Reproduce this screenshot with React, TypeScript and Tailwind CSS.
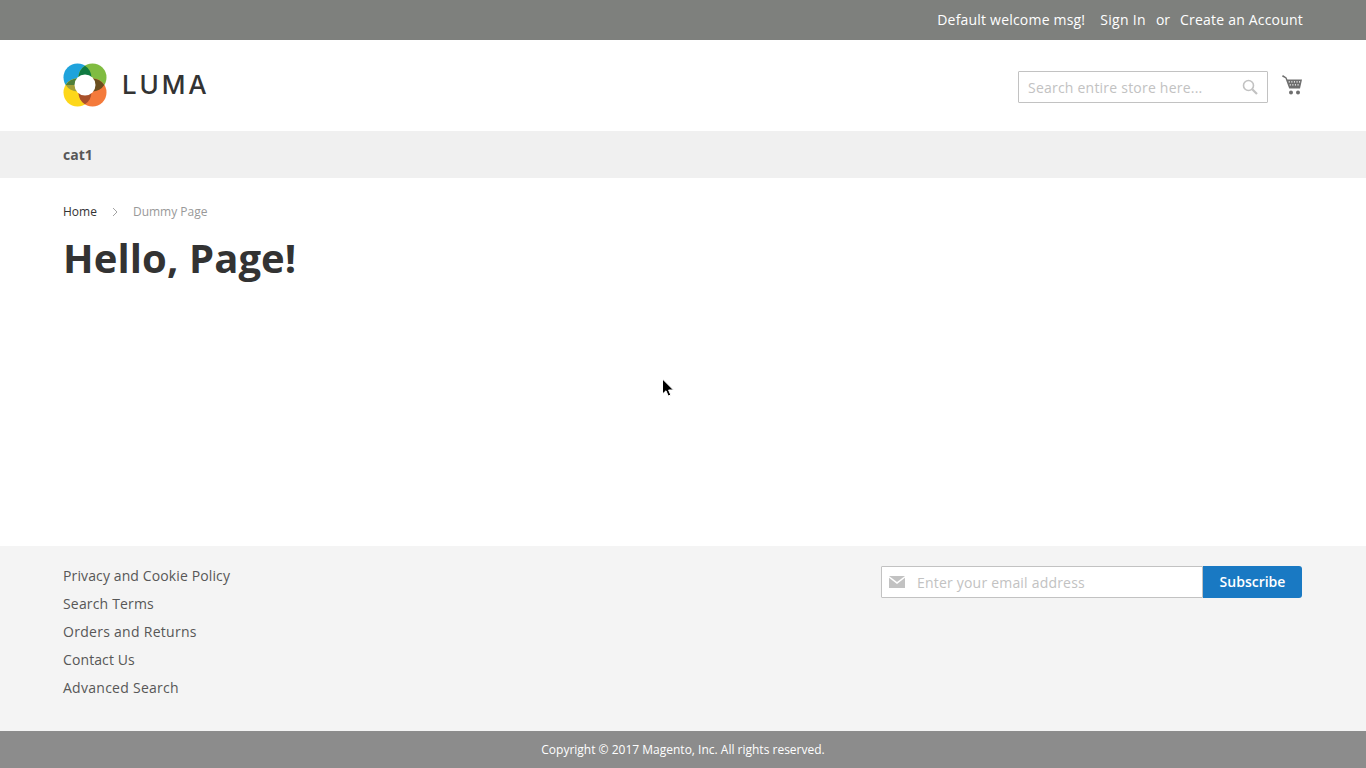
import React from "react";

const Logo = () => (
  <svg width="44" height="44" viewBox="0 0 44 44" className="block">
    <circle cx="14.5" cy="14.5" r="14" fill="#1fa3dc" />
    <circle cx="29.5" cy="14.5" r="14" fill="#80bc41" />
    <circle cx="14.5" cy="29.5" r="14" fill="#fdd71a" />
    <circle cx="29.5" cy="29.5" r="14" fill="#f47a3b" />
    <path d="M22 2.7 A14 14 0 0 1 22 26.3 A14 14 0 0 1 22 2.7Z" fill="#0f7a41" />
    <path d="M2.7 22 A14 14 0 0 1 26.3 22 A14 14 0 0 1 2.7 22Z" fill="#a3a03a" />
    <path d="M2.7 22 A14 14 0 0 1 26.3 22Z" fill="#4f7f39" />
    <path d="M17.7 22 A14 14 0 0 1 41.3 22 A14 14 0 0 1 17.7 22Z" fill="#6b4f1f" />
    <path d="M22 17.7 A14 14 0 0 1 22 41.3 A14 14 0 0 1 22 17.7Z" fill="#a9502a" />
    <circle cx="22" cy="22" r="10.5" fill="#fff" />
  </svg>
);

const Cart = () => (
  <svg width="20" height="20" viewBox="0 0 20 20" className="block" fill="#6e6e6e">
    <path d="M0 1.4 L0.9 0 L4.6 2.4 L5.4 4.6 H20 L18 13.6 H7.2 L3.4 3.3Z" />
    <path d="M6.7 6.3h1.1v1.1H6.7zM9.3 6.3h1.1v1.1H9.3zM11.9 6.3H13v1.1h-1.1zM14.5 6.3h1.1v1.1h-1.1zM17 6.3h1.1v1.1H17zM7.7 9.3h1.1v1.1H7.7zM10.3 9.3h1.1v1.1h-1.1zM12.9 9.3H14v1.1h-1.1zM15.5 9.3h1.1v1.1h-1.1z" fill="#fff" />
    <circle cx="9" cy="17.4" r="2" />
    <circle cx="16" cy="17.4" r="2" />
  </svg>
);

const Search = () => (
  <svg width="16" height="16" viewBox="0 0 16 16" fill="none" stroke="#c2c2c2" className="block">
    <circle cx="6.5" cy="6.5" r="5" strokeWidth="1.6" />
    <path d="M10.2 10.2 L15 15" strokeWidth="2.2" />
  </svg>
);

const Mail = () => (
  <svg width="16" height="12" viewBox="0 0 16 12" fill="#c2c2c2" className="block">
    <path d="M0 0H16L8 6Z" />
    <path d="M0 1.8V12H16V1.8L8 8Z" />
  </svg>
);

export default function App() {
  return (
    <div className="relative flex h-[768px] w-full flex-col overflow-hidden bg-white font-['Open_Sans',sans-serif] text-[14px] text-[#333]">
      <div className="flex h-[40px] items-center justify-end bg-[#7e807d] pb-[2px] pr-[63px] text-white">
        <span className="tracking-[0.2px]">Default welcome msg!</span>
        <span className="ml-[15px] tracking-[0.3px]">Sign In</span>
        <span className="ml-[10px]">or</span>
        <span className="ml-[10px] tracking-[0.2px]">Create an Account</span>
      </div>

      <header className="flex h-[91px] items-start justify-between pl-[63px] pr-[64px]">
        <div className="mt-[23px] flex items-center">
          <Logo />
          <span className="ml-[15px] font-['Inter',sans-serif] text-[26px] leading-none font-medium tracking-[0.11em] text-[#333]">LUMA</span>
        </div>
        <div className="mt-[31px] flex items-start">
          <div className="flex h-[32px] w-[250px] items-center justify-between rounded-[1px] border border-[#c2c2c2] bg-white pl-[9px] pr-[9px]">
            <span className="tracking-[0.22px] text-[#c2c2c2]">Search entire store here...</span>
            <Search />
          </div>
          <div className="ml-[14px] mt-[4px]">
            <Cart />
          </div>
        </div>
      </header>

      <nav className="flex h-[47px] items-center bg-[#f0f0f0] pl-[63px] font-bold text-[#575757]">cat1</nav>

      <main className="flex-1 pl-[63px]">
        <div className="mt-[25px] flex h-[18px] items-center text-[12px]">
          <span className="text-[#333]">Home</span>
          <svg width="6" height="10" viewBox="0 0 6 10" fill="none" stroke="#a3a3a3" strokeWidth="1" className="ml-[15px] mr-[15px] block">
            <path d="M1 1 L5 5 L1 9" />
          </svg>
          <span className="text-[#999]">Dummy Page</span>
        </div>
        <h1 className="mt-[12px] text-[40px] leading-[50px] font-bold tracking-[0.1px] text-[#333]">Hello, Page!</h1>
      </main>

      <footer className="flex h-[185px] justify-between bg-[#f4f4f4] pl-[63px] pr-[64px] pt-[16px]">
        <ul className="flex flex-col text-[#575757]">
          <li className="h-[28px] leading-[28px] tracking-[0.12px]">Privacy and Cookie Policy</li>
          <li className="h-[28px] leading-[28px] tracking-[0.17px]">Search Terms</li>
          <li className="h-[28px] leading-[28px] tracking-[0.28px]">Orders and Returns</li>
          <li className="h-[28px] leading-[28px] tracking-[0.1px]">Contact Us</li>
          <li className="h-[28px] leading-[28px] tracking-[0.27px]">Advanced Search</li>
        </ul>
        <div className="mt-[4px] flex h-[32px] w-[421px]">
          <div className="flex flex-1 items-center rounded-l-[1px] border border-[#c2c2c2] bg-white pl-[7px]">
            <Mail />
            <span className="ml-[12px] tracking-[0.2px] text-[#c2c2c2]">Enter your email address</span>
          </div>
          <div className="flex w-[99px] items-center justify-center rounded-r-[3px] bg-[#1979c3] pb-[2px] font-semibold text-white">Subscribe</div>
        </div>
      </footer>

      <div className="flex h-[37px] items-center justify-center bg-[#8c8c8c] text-[12px] text-white">
        Copyright © 2017 Magento, Inc. All rights reserved.
      </div>

      <svg width="14" height="22" viewBox="0 0 14 22" className="absolute left-[661px] top-[378px]">
        <path d="M1.5 1 V16 L5 12.8 L7.2 18 L9.8 17 L7.6 12 H12.5Z" fill="#000" stroke="#fff" strokeWidth="1" />
      </svg>
    </div>
  );
}
